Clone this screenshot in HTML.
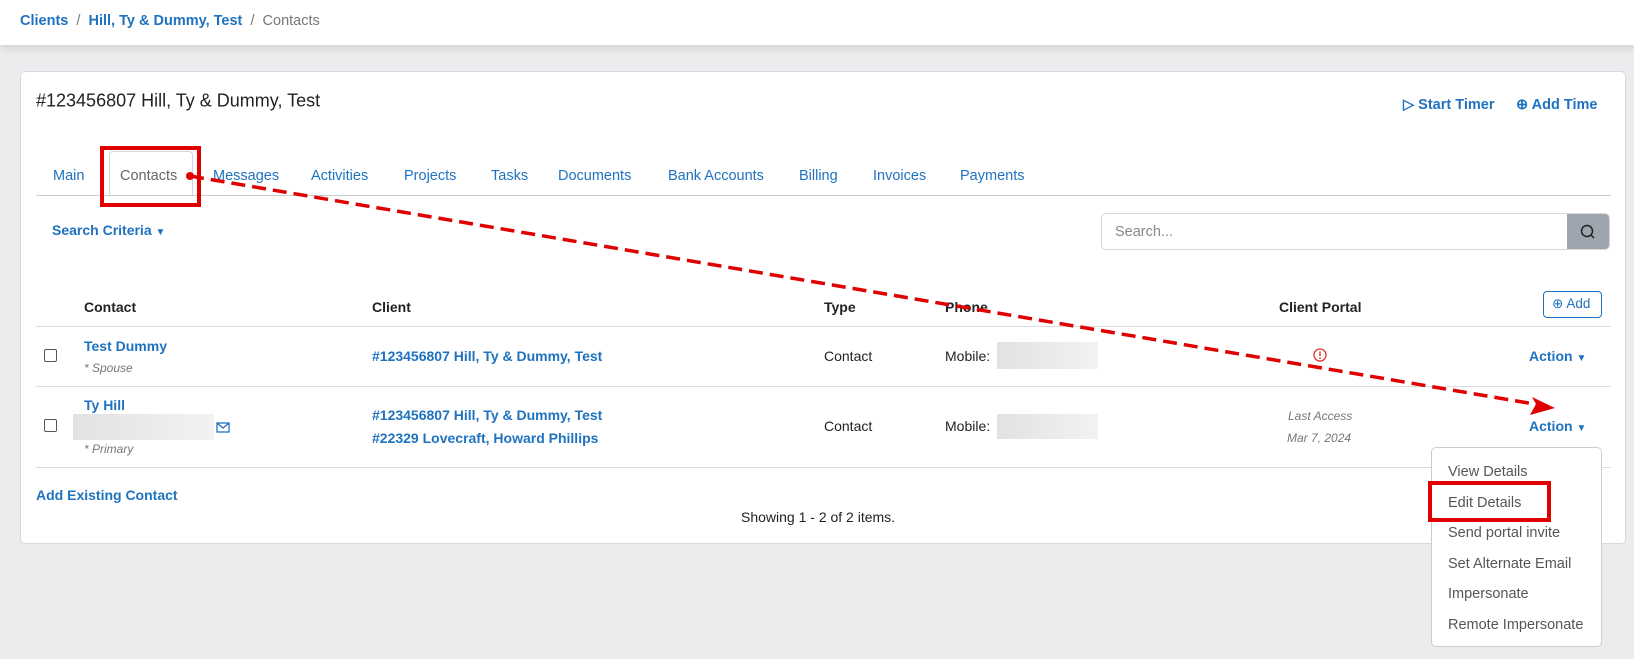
<!DOCTYPE html>
<html><head><meta charset="utf-8"><style>
*{box-sizing:border-box;margin:0;padding:0}
body{width:1634px;height:659px;background:#ebecee;font-family:"Liberation Sans",sans-serif;position:relative;overflow:hidden;color:#222;font-size:14px}
.a{position:absolute;white-space:nowrap}
.b{color:#1f72bf}
.bold{font-weight:bold}
.hdr{position:absolute;left:0;top:0;width:1634px;height:45px;background:#fff;box-shadow:0 3px 8px rgba(0,0,0,.12)}
.card{position:absolute;left:20px;top:71px;width:1606px;height:473px;background:#fff;border:1px solid #d8d9dc;border-radius:5px}
.t{transform:translateY(-50%)}
.line{position:absolute;height:1px;background:#dcdcdc}
.cb{position:absolute;width:13px;height:13px;border:1px solid #555;border-radius:2px;background:#fff}
.grey{position:absolute;background:linear-gradient(90deg,#e2e2e2,#f2f2f2)}
.dd div{position:absolute;left:16px;color:#555;font-size:14.5px;transform:translateY(-50%)}
i{font-style:italic;color:#777}
</style></head><body>
<div class="hdr"></div>
<div class="a t b bold" style="left:20px;top:21px;font-size:14.5px">Clients <span style="color:#777;font-weight:normal">&nbsp;/&nbsp;</span> Hill, Ty &amp; Dummy, Test <span style="color:#777;font-weight:normal">&nbsp;/&nbsp; Contacts</span></div>
<div class="card"></div>
<div class="a t" style="left:36px;top:101px;font-size:18px">#123456807 Hill, Ty &amp; Dummy, Test</div>
<div class="a t b bold" style="left:1403px;top:105px;font-size:14.5px">▷ Start Timer</div>
<div class="a t b bold" style="left:1516px;top:105px;font-size:14.5px">⊕ Add Time</div>
<div style="position:absolute;left:109px;top:151px;width:84px;height:45px;border:1px solid #d6d6d6;border-bottom:none;border-radius:4px 4px 0 0;background:#fff"></div>
<div class="line" style="left:36px;top:195px;width:1575px;background:#ccc"></div>
<div class="a t b" style="left:53px;top:176px;font-size:14.5px">Main</div>
<div class="a t" style="left:120px;top:176px;color:#666;font-size:14.5px">Contacts</div>
<div class="a t b" style="left:213px;top:176px;font-size:14.5px">Messages</div>
<div class="a t b" style="left:311px;top:176px;font-size:14.5px">Activities</div>
<div class="a t b" style="left:404px;top:176px;font-size:14.5px">Projects</div>
<div class="a t b" style="left:491px;top:176px;font-size:14.5px">Tasks</div>
<div class="a t b" style="left:558px;top:176px;font-size:14.5px">Documents</div>
<div class="a t b" style="left:668px;top:176px;font-size:14.5px">Bank Accounts</div>
<div class="a t b" style="left:799px;top:176px;font-size:14.5px">Billing</div>
<div class="a t b" style="left:873px;top:176px;font-size:14.5px">Invoices</div>
<div class="a t b" style="left:960px;top:176px;font-size:14.5px">Payments</div>
<div class="a t b bold" style="left:52px;top:230px">Search Criteria <span style="font-size:10px">▼</span></div>
<div style="position:absolute;left:1101px;top:213px;width:509px;height:37px;border:1px solid #d8d8d8;border-radius:5px;background:#fff;overflow:hidden">
<div class="a t" style="left:13px;top:18px;color:#888;font-size:14.5px">Search...</div>
<div style="position:absolute;right:0;top:0;width:42px;height:37px;background:#9ea5ae"><svg width="42" height="37"><circle cx="20" cy="17" r="5.5" fill="none" stroke="#222" stroke-width="1.5"/><line x1="24" y1="21" x2="27" y2="24" stroke="#222" stroke-width="1.5"/></svg></div></div>
<div class="a t bold" style="left:84px;top:307px">Contact</div>
<div class="a t bold" style="left:372px;top:307px">Client</div>
<div class="a t bold" style="left:824px;top:307px">Type</div>
<div class="a t bold" style="left:945px;top:307px">Phone</div>
<div class="a t bold" style="left:1279px;top:307px">Client Portal</div>
<div style="position:absolute;left:1543px;top:291px;width:59px;height:27px;border:1px solid #1f72bf;border-radius:4px" ></div>
<div class="a t b" style="left:1552px;top:304px;font-size:13.5px">⊕ Add</div>
<div class="line" style="left:36px;top:326px;width:1575px"></div>
<div class="cb" style="left:44px;top:349px"></div>
<div class="a t b bold" style="left:84px;top:346px">Test Dummy</div>
<div class="a t" style="left:84px;top:368px;font-size:12px"><i>* Spouse</i></div>
<div class="a t b bold" style="left:372px;top:356px">#123456807 Hill, Ty &amp; Dummy, Test</div>
<div class="a t" style="left:824px;top:356px">Contact</div>
<div class="a t" style="left:945px;top:356px">Mobile:</div>
<div class="grey" style="left:997px;top:342px;width:101px;height:27px"></div>
<svg style="position:absolute;left:1313px;top:348px" width="14" height="14"><circle cx="7" cy="7" r="6" fill="none" stroke="#e03030" stroke-width="1.3"/><line x1="7" y1="3.5" x2="7" y2="8" stroke="#e03030" stroke-width="1.4"/><circle cx="7" cy="10.2" r=".9" fill="#e03030"/></svg>
<div class="a t b bold" style="left:1529px;top:356px">Action <span style="font-size:10px">▼</span></div>
<div class="line" style="left:36px;top:386px;width:1575px"></div>
<div class="cb" style="left:44px;top:419px"></div>
<div class="a t b bold" style="left:84px;top:405px">Ty Hill</div>
<div class="grey" style="left:73px;top:414px;width:141px;height:26px"></div>
<svg style="position:absolute;left:216px;top:422px" width="14" height="11"><rect x="1" y="1" width="12" height="9" fill="none" stroke="#1f72bf" stroke-width="1.3"/><path d="M1 1 L7 6 L13 1" fill="none" stroke="#1f72bf" stroke-width="1.3"/></svg>
<div class="a t" style="left:84px;top:449px;font-size:12px"><i>* Primary</i></div>
<div class="a t b bold" style="left:372px;top:415px">#123456807 Hill, Ty &amp; Dummy, Test</div>
<div class="a t b bold" style="left:372px;top:438px">#22329 Lovecraft, Howard Phillips</div>
<div class="a t" style="left:824px;top:426px">Contact</div>
<div class="a t" style="left:945px;top:426px">Mobile:</div>
<div class="grey" style="left:997px;top:414px;width:101px;height:25px"></div>
<div class="a t" style="left:1288px;top:416px;font-size:12px"><i>Last Access</i></div>
<div class="a t" style="left:1287px;top:438px;font-size:12px"><i>Mar 7, 2024</i></div>
<div class="a t b bold" style="left:1529px;top:426px">Action <span style="font-size:10px">▼</span></div>
<div class="line" style="left:36px;top:467px;width:1575px"></div>
<div class="a t b bold" style="left:36px;top:495px">Add Existing Contact</div>
<div class="a t" style="left:741px;top:517px">Showing 1 - 2 of 2 items.</div>
<div class="dd" style="position:absolute;left:1431px;top:447px;width:171px;height:200px;background:#fff;border:1px solid #ccc;border-radius:5px">
<div style="top:24px">View Details</div><div style="top:55px">Edit Details</div><div style="top:85px">Send portal invite</div><div style="top:116px">Set Alternate Email</div><div style="top:146px">Impersonate</div><div style="top:177px">Remote Impersonate</div></div>
<svg style="position:absolute;left:0;top:0" width="1634" height="659">
<rect x="102" y="148" width="97" height="57" fill="none" stroke="#e00000" stroke-width="4"/>
<rect x="1430" y="483" width="119" height="37" fill="none" stroke="#e00000" stroke-width="4"/>
<circle cx="190" cy="176" r="4" fill="#e00000"/>
<line x1="190" y1="176" x2="1540" y2="405" stroke="#e00000" stroke-width="3.5" stroke-dasharray="14,7"/>
<path d="M1555 408 L1532 397 L1536 404 L1530 415 Z" fill="#e00000"/>
</svg>
</body></html>
